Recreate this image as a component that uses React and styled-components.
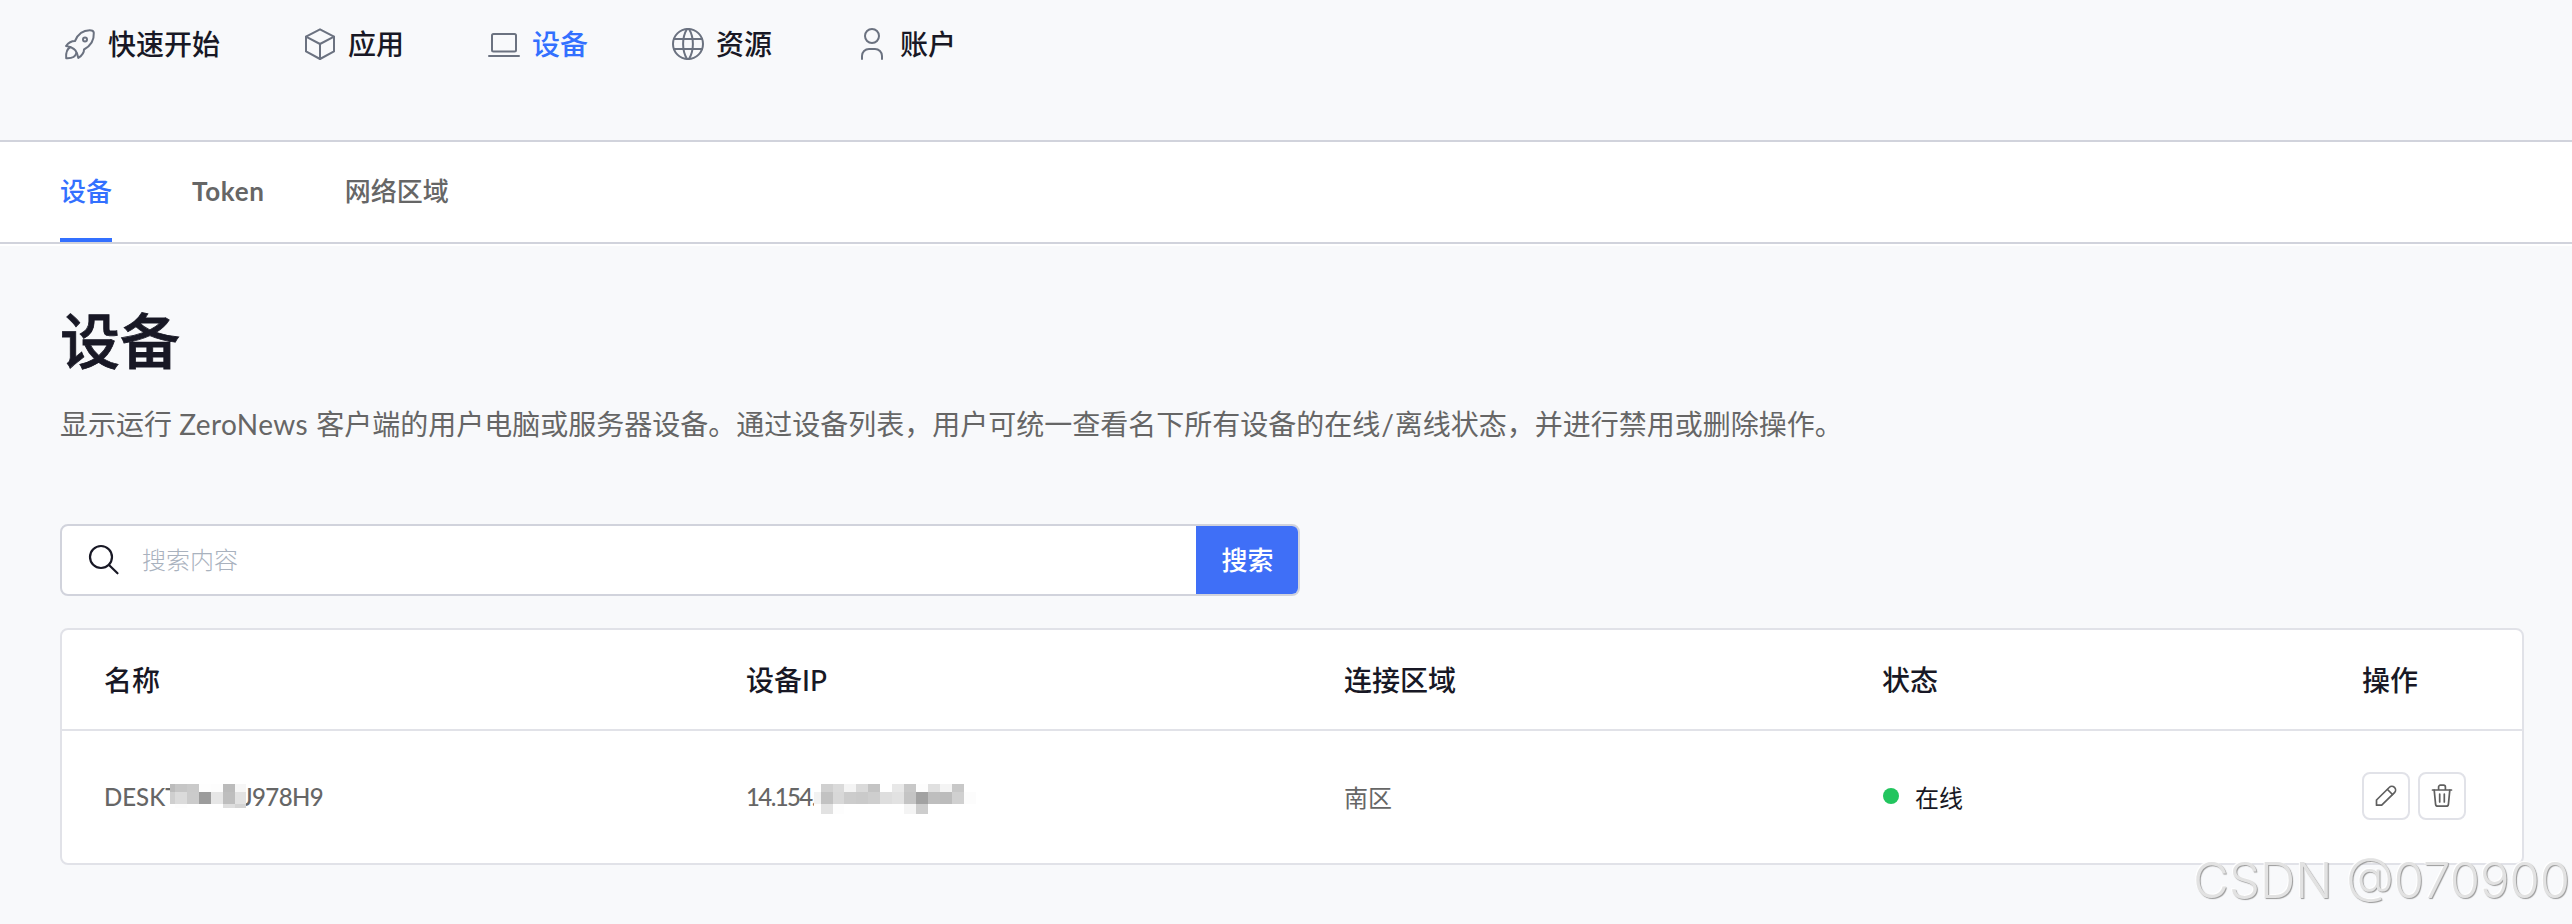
import React from 'react';
import styled, { createGlobalStyle } from 'styled-components';

const GlobalStyle = createGlobalStyle`
  * {
    box-sizing: border-box;
    margin: 0;
    padding: 0;
  }

  body {
    background-color: #f8f9fb;
    color: #181825;
    font-family: Lato, 'Noto Sans CJK SC', sans-serif;
    font-size: 24px;
  }

  ul {
    list-style: none;
  }

  button, input {
    border: none;
    background: none;
    font: inherit;
  }
`;

const Page = styled.div`
  position: relative;
  height: 924px;
  overflow: hidden;
`;

const Header = styled.header`
  height: 142px;
  padding: 22px 64px 0;
  border-bottom: 2px solid #d1d3dc;
`;

const NavList = styled.ul`
  display: flex;
  gap: 84px;
`;

const NavItem = styled.li`
  display: flex;
  align-items: center;
  gap: 12px;
  height: 44px;
  font-size: 28px;
  font-weight: 500;
  line-height: 44px;
  white-space: nowrap;
  color: ${({ $active }) => ($active ? '#3370ff' : '#181825')};

  & svg {
    flex: none;
    width: 32px;
    height: 32px;
    color: #6b7280;
  }
`;

const Tabs = styled.nav`
  display: flex;
  gap: 80px;
  height: 104px;
  padding: 0 60px;
  background-color: #fff;
  border-bottom: 2px solid #fff;
  box-shadow: inset 0 -2px 0 #d1d3dc;
`;

const Tab = styled.a`
  height: 100px;
  font-size: 26px;
  font-weight: ${({ $bold }) => ($bold ? 700 : 500)};
  letter-spacing: ${({ $bold }) => ($bold ? '0.7px' : 'normal')};
  line-height: 99px;
  color: ${({ $active }) => ($active ? '#3370ff' : '#666')};
  box-shadow: ${({ $active }) => ($active ? 'inset 0 -4px 0 #3370ff' : 'none')};
`;

const Main = styled.main`
  padding: 54px 48px 0 60px;
`;

const Title = styled.h1`
  font-size: 60px;
  font-weight: 500;
  line-height: 83px;
  -webkit-text-stroke: 0.8px #181825;
`;

const Description = styled.p`
  margin-top: 21px;
  font-size: 28px;
  line-height: 40px;
  white-space: nowrap;
  color: #666;
`;

const Brand = styled.span`
  margin-right: 1px;
  letter-spacing: 0.4px;
`;

const Slash = styled.span`
  padding: 0 1px;
`;

const SearchBox = styled.div`
  display: flex;
  align-items: center;
  width: 1240px;
  height: 72px;
  margin-top: 80px;
  padding-left: 26px;
  border: 2px solid #d1d3dc;
  border-radius: 8px;
  background-color: #fff;
  overflow: hidden;

  & svg {
    flex: none;
    width: 32px;
    height: 32px;
  }
`;

const SearchInput = styled.input`
  flex: 1;
  height: 68px;
  padding: 0 0 2px 22px;
  font-size: 24px;
  outline: none;

  &::placeholder {
    color: #a9b2be;
    font-weight: 300;
  }
`;

const SearchButton = styled.button`
  width: 102px;
  height: 68px;
  padding-left: 1px;
  font-size: 26px;
  font-weight: 500;
  line-height: 66px;
  color: #fff;
  background-color: #3f6ff7;
`;

const Table = styled.div`
  height: 237px;
  margin-top: 32px;
  border: 2px solid #e1e2e8;
  border-radius: 8px;
  background-color: #fff;
`;

const Row = styled.div`
  display: grid;
  grid-template-columns: 642px 598px 538px 480px 1fr;
  align-items: center;
  height: 130px;
  padding-left: 42px;
  color: #666;
`;

const HeadRow = styled(Row)`
  height: 101px;
  padding-bottom: 1px;
  border-bottom: 2px solid #e1e2e8;
  font-size: 28px;
  font-weight: 500;
  color: #181825;
`;

const Cell = styled.div`
  display: flex;
  align-items: center;
  white-space: nowrap;
  font-weight: ${({ $medium }) => ($medium ? 500 : 'inherit')};
`;

const Fragment = styled.span`
  letter-spacing: ${({ $spacing }) => $spacing || 0}px;
`;

const Mosaic = styled.span`
  position: relative;
  display: grid;
  flex: none;
  margin: ${({ $margin }) => $margin};
  grid-template-columns: ${({ $columns }) => $columns.map((w) => `${w}px`).join(' ')};
  grid-template-rows: ${({ $rows }) => $rows.map((h) => `${h}px`).join(' ')};
`;

const MosaicBlock = styled.i`
  background-color: ${({ $shade }) => `#${$shade}`};
`;

const Status = styled(Cell)`
  gap: 16px;
  padding-left: 1px;
  color: #181825;

  &::before {
    content: '';
    width: 16px;
    height: 16px;
    border-radius: 50%;
    background-color: #22c55e;
  }
`;

const Actions = styled(Cell)`
  gap: 8px;
`;

const ActionButton = styled.button`
  display: flex;
  align-items: center;
  justify-content: center;
  width: 48px;
  height: 48px;
  border: 2px solid #e1e2e8;
  border-radius: 8px;
  color: #5f5f5f;

  & svg {
    width: 24px;
    height: 24px;
  }
`;

const Watermark = styled.div`
  position: absolute;
  right: 2px;
  bottom: 14px;
  font-family: Inter, 'Liberation Sans', sans-serif;
  font-size: 49px;
  font-weight: 300;
  line-height: 58px;
  white-space: nowrap;
  color: #e2e2e2;
  text-shadow: 1px 1px 1px #999, -1px -1px 1px #fff;
`;

const Icon = ({ size = 32, width = 2, children }) => (
  <svg
    viewBox={`0 0 ${size} ${size}`}
    fill='none'
    stroke='currentColor'
    strokeWidth={width}
    strokeLinecap='round'
    strokeLinejoin='round'
  >
    {children}
  </svg>
);

const RocketIcon = () => (
  <Icon>
    <path d='M11 13C14 6 20 1.8 27.4 2.4Q29.6 2.6 29.800 4.800C30.200 12 26.500 18 20 21.500C20.200 25.500 18 27.500 14.300 30C13.800 27.500 13.400 25.200 11.400 22.400C9 19.600 6 18.600 2 18C4.500 14.600 7.500 13 11 13Z' />
    <path d='M6.500 19C2.500 21 1.800 25.500 2.200 30.200C7 30.500 11.200 29.500 12.400 25' />
    <circle cx='21' cy='11.400' r='2' />
  </Icon>
);

const CubeIcon = () => (
  <Icon>
    <path d='M16 1.300L30 8.700V23.400L16 31L2 23.400V8.700Z' />
    <path d='M2 8.700L16 16L30 8.700M16 16V31' />
  </Icon>
);

const LaptopIcon = () => (
  <Icon>
    <rect x='4' y='6' width='24' height='17.600' rx='1.500' />
    <path d='M1 28H31' />
  </Icon>
);

const GlobeIcon = () => (
  <Icon>
    <circle cx='16' cy='16' r='15' />
    <path d='M2 11H30M2 21H30' />
    <path d='M15 1C9.800 9.500 9.800 22.500 15 31M17 1C22.200 9.500 22.200 22.500 17 31' />
  </Icon>
);

const UserIcon = () => (
  <Icon>
    <circle cx='16' cy='8' r='7' />
    <path d='M6 31V28A7 7 0 0 1 13 21H19A7 7 0 0 1 26 28V31' />
  </Icon>
);

const SearchIcon = () => (
  <Icon width={2.2}>
    <circle cx='13' cy='13' r='11' />
    <path d='M21 21L29.500 29.300' />
  </Icon>
);

const EditIcon = () => (
  <Icon size={24} width={1.7}>
    <path d='M2.500 16L15.200 3.500A3.700 3.700 0 0 1 20.500 8.700L7.700 21.200H2.500Z' />
    <path d='M13.500 5.500L18.500 10.500' />
  </Icon>
);

const TrashIcon = () => (
  <Icon size={24} width={1.7}>
    <path d='M2.500 6H21.500M8.600 5.600V3A1.800 1.800 0 0 1 10.400 1.200H13.600A1.800 1.800 0 0 1 15.400 3V5.600' />
    <path d='M4.200 6.200L5.600 20.300A2.200 2.200 0 0 0 7.800 22.200H16.200A2.200 2.200 0 0 0 18.400 20.300L19.800 6.200' />
    <path d='M9.700 10V18M14.300 10V18' />
  </Icon>
);

const navItems = [
  { label: '快速开始', icon: <RocketIcon /> },
  { label: '应用', icon: <CubeIcon /> },
  { label: '设备', icon: <LaptopIcon />, active: true },
  { label: '资源', icon: <GlobeIcon /> },
  { label: '账户', icon: <UserIcon /> },
];

const columns = ['名称', '设备IP', '连接区域', '状态', '操作'];

// hidden parts of the device name and of its address
const nameMask = {
  columns: [5, 12, 12, 12, 12, 12, 11],
  rows: [8, 12, 4],
  shades: [
    'bcbcbc', 'c6c6c6', 'cacaca', 'fefefe', 'fdfdfd', 'bbbbbb', 'f6f6f6',
    'cfcfcf', 'dbdbdb', 'cbcbcb', '9c9c9c', 'e6e6e6', 'bebebe', 'e2e2e2',
    'ffffff', 'fdfdfd', 'ffffff', 'ffffff', 'ffffff', 'dedede', 'd4d4d4',
  ],
};

const ipMask = {
  columns: [7, 12, 11, 12, 12, 12, 12, 12, 12, 12, 12, 12, 12, 12],
  rows: [8, 12, 10],
  shades: [
    'ffffff', 'd0d0d0', 'dadada', 'f4f4f4', 'dadada', 'c4c4c4', 'ffffff',
    'e8e8e8', 'c8c8c8', 'fdfdfd', 'e0e0e0', 'f4f4f4', 'c8c8c8', 'ffffff',
    'f2f2f2', 'c2c2c2', 'd8d8d8', 'cccccc', 'cacaca', 'cecece', 'dedede',
    'e2e2e2', 'c4c4c4', 'a2a2a2', 'bebebe', 'bcbcbc', 'd0d0d0', 'fcfcfc',
    'ffffff', 'e2e2e2', 'fdfdfd', 'ffffff', 'ffffff', 'ffffff', 'ffffff',
    'ffffff', 'f4f4f4', 'cdcdcd', 'ffffff', 'ffffff', 'ffffff', 'ffffff',
  ],
};

const Mask = ({ mask, margin }) => (
  <Mosaic $columns={mask.columns} $rows={mask.rows} $margin={margin}>
    {mask.shades.map((shade, index) => (
      <MosaicBlock key={index} $shade={shade} />
    ))}
  </Mosaic>
);

const App = () => {
  return (
    <Page>
      <GlobalStyle />
      <Header>
        <NavList>
          {navItems.map(({ label, icon, active }) => (
            <NavItem key={label} $active={active}>
              {icon}
              {label}
            </NavItem>
          ))}
        </NavList>
      </Header>

      <Tabs>
        <Tab $active>设备</Tab>
        <Tab $bold>Token</Tab>
        <Tab>网络区域</Tab>
      </Tabs>

      <Main>
        <Title>设备</Title>
        <Description>
          显示运行 <Brand>ZeroNews</Brand> 客户端的用户电脑或服务器设备。通过设备列表，用户可统一查看名下所有设备的在线<Slash>/</Slash>离线状态，并进行禁用或删除操作。
        </Description>

        <SearchBox>
          <SearchIcon />
          <SearchInput placeholder='搜索内容' />
          <SearchButton>搜索</SearchButton>
        </SearchBox>

        <Table>
          <HeadRow>
            {columns.map((column) => (
              <Cell key={column}>{column}</Cell>
            ))}
          </HeadRow>
          <Row>
            <Cell $medium>
              <Fragment>DESKT</Fragment>
              <Mask mask={nameMask} margin='0 -4px 0 -9px' />
              <Fragment $spacing={-0.6}>J978H9</Fragment>
            </Cell>
            <Cell $medium>
              <Fragment $spacing={-1.6}>14.154.</Fragment>
              <Mask mask={ipMask} margin='6px 0 0 -2px' />
            </Cell>
            <Cell>南区</Cell>
            <Status>在线</Status>
            <Actions>
              <ActionButton aria-label='编辑'>
                <EditIcon />
              </ActionButton>
              <ActionButton aria-label='删除'>
                <TrashIcon />
              </ActionButton>
            </Actions>
          </Row>
        </Table>
      </Main>

      <Watermark>CSDN @070900</Watermark>
    </Page>
  );
}

export default App;
